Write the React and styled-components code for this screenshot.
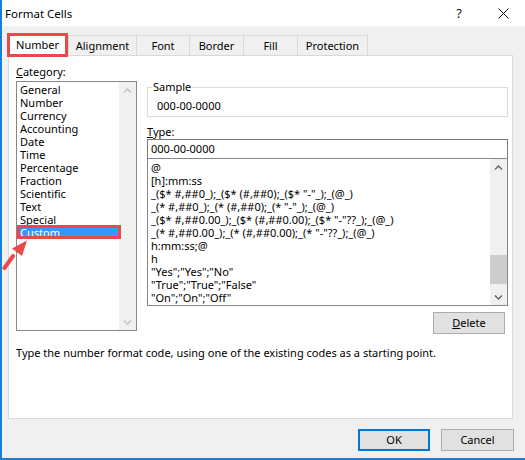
import React from "react";
import styled, { createGlobalStyle } from "styled-components";

const GlobalStyle = createGlobalStyle`
  html, body {
    margin: 0;
    padding: 0;
    background: #ffffff;
  }
  body {
    font-family: "Noto Sans", "Open Sans", sans-serif;
    font-size: 11px;
    color: #000000;
  }
  * {
    box-sizing: border-box;
  }
`;

const Window = styled.div`
  position: relative;
  width: 525px;
  height: 460px;
  background: #f0f0f0;
  border-left: 2px solid #1a7fd4;
  border-bottom: 2px solid #1a7fd4;
  display: flex;
  flex-direction: column;
  overflow: hidden;
`;

const TitleBar = styled.div`
  height: 26px;
  flex-shrink: 0;
  background: #ffffff;
  display: flex;
  align-items: center;
  padding-left: 3px;
`;

const Title = styled.span`
  flex: 1;
  font-size: 11.5px;
  line-height: 16px;
  padding-top: 1px;
`;

const TitleButton = styled.div`
  width: 44px;
  height: 26px;
  display: flex;
  align-items: center;
  justify-content: center;
  font-size: 13px;
  color: #111;
`;

const TabRow = styled.div`
  display: flex;
  align-items: flex-end;
  height: 22px;
  margin-top: 7px;
  padding-left: 5px;
`;

const Tab = styled.div`
  position: relative;
  width: ${(p) => p.w}px;
  height: ${(p) => (p.active ? 24 : 20)}px;
  margin-left: ${(p) => (p.first || p.afterActive ? 0 : -1)}px;
  margin-bottom: ${(p) => (p.active ? -2 : 0)}px;
  z-index: ${(p) => (p.active ? 1 : 0)};
  display: flex;
  align-items: center;
  justify-content: center;
  background: ${(p) => (p.active ? "#ffffff" : "#f0f0f0")};
  border: ${(p) => (p.active ? "3px solid #e84a4a" : "1px solid #d9d9d9")};
  border-bottom: ${(p) => (p.active ? "3px solid #e84a4a" : "none")};
  line-height: 16px;
`;

const Panel = styled.div`
  margin-left: 6px;
  width: 505px;
  height: 364px;
  flex-shrink: 0;
  background: #ffffff;
  border: 1px solid #d9d9d9;
  padding: 8px 4px 0 7px;
  display: flex;
  flex-direction: column;
`;

const ContentRow = styled.div`
  display: flex;
  gap: 10px;
`;

const LeftCol = styled.div`
  width: 121px;
  display: flex;
  flex-direction: column;
`;

const RightCol = styled.div`
  width: 361px;
  display: flex;
  flex-direction: column;
`;

const Label = styled.div`
  line-height: ${(p) => p.lh || 16}px;
  margin-top: ${(p) => p.mt || 0}px;
`;

const ListBox = styled.div`
  margin-top: 1px;
  height: 250px;
  border: 1px solid #828790;
  display: flex;
`;

const ListItems = styled.div`
  flex: 1;
  padding-top: 1px;
`;

const ListItem = styled.div`
  position: relative;
  height: 13px;
  line-height: 13px;
  padding-left: 3px;
  white-space: nowrap;
  background: ${(p) => (p.selected ? "#3399ff" : "transparent")};
  color: ${(p) => (p.selected ? "#ffffff" : "#000000")};

  ${(p) =>
    p.selected &&
    `
    &::after {
      content: "";
      position: absolute;
      top: -1px;
      left: 0;
      right: -2px;
      bottom: 0;
      border: 3px solid #e84a4a;
    }
  `}
`;

const ScrollBar = styled.div`
  width: 17px;
  background: #f0f0f0;
  display: flex;
  flex-direction: column;
`;

const ScrollArrow = styled.div`
  height: 17px;
  display: flex;
  align-items: center;
  justify-content: center;
`;

const ScrollTrack = styled.div`
  flex: 1;
`;

const Thumb = styled.div`
  margin-top: ${(p) => p.top}px;
  height: ${(p) => p.size}px;
  background: #cdcdcd;
`;

const GroupBox = styled.fieldset`
  margin: 16px 0 0 0;
  padding: 0 0 2px 9px;
  border: 1px solid #dcdcdc;
  min-width: 0;
`;

const Legend = styled.legend`
  margin-left: -5px;
  padding: 0 1px;
  line-height: 14px;
`;

const SampleValue = styled.div`
  padding-top: 4px;
  line-height: 16px;
`;

const TextInput = styled.div`
  height: 20px;
  border: 1px solid #7a7a7a;
  padding: 0 3px;
  line-height: 18px;
`;

const CodeList = styled.div`
  margin-top: -1px;
  height: 148px;
  border: 1px solid #828790;
  display: flex;
`;

const CodeLines = styled.div`
  flex: 1;
  padding: 2px 0 0 3px;
  line-height: 13px;
  white-space: pre;
  overflow: hidden;
`;

const Button = styled.div`
  width: ${(p) => p.w}px;
  height: 22px;
  display: flex;
  align-items: center;
  justify-content: center;
  background: #e1e1e1;
  border: ${(p) => (p.primary ? "2px solid #0078d7" : "1px solid #adadad")};
  line-height: 16px;
`;

const DeleteRow = styled.div`
  display: flex;
  justify-content: flex-end;
  margin: 6px 3px 0 0;
`;

const Description = styled.div`
  margin-top: 11px;
  line-height: 16px;
`;

const Footer = styled.div`
  display: flex;
  justify-content: flex-end;
  gap: 11px;
  padding: 10px 11px 0 0;
`;

const Arrow = styled.svg`
  position: absolute;
  left: -2px;
  top: 236px;
`;

const Chevron = ({ down, color }) => (
  <svg width="9" height="6" viewBox="0 0 9 6">
    <path
      d={down ? "M1 1.5 L4.5 5 L8 1.5" : "M1 4.5 L4.5 1 L8 4.5"}
      fill="none"
      stroke={color}
      strokeWidth="1.4"
    />
  </svg>
);

const tabs = [
  { name: "Number", w: 61 },
  { name: "Alignment", w: 69 },
  { name: "Font", w: 54 },
  { name: "Border", w: 55 },
  { name: "Fill", w: 55 },
  { name: "Protection", w: 71 },
];

const categories = [
  "General",
  "Number",
  "Currency",
  "Accounting",
  "Date",
  "Time",
  "Percentage",
  "Fraction",
  "Scientific",
  "Text",
  "Special",
  "Custom",
];

const codes = [
  "@",
  "[h]:mm:ss",
  '_($* #,##0_);_($* (#,##0);_($* "-"_);_(@_)',
  '_(* #,##0_);_(* (#,##0);_(* "-"_);_(@_)',
  '_($* #,##0.00_);_($* (#,##0.00);_($* "-"??_);_(@_)',
  '_(* #,##0.00_);_(* (#,##0.00);_(* "-"??_);_(@_)',
  "h:mm:ss;@",
  "h",
  '"Yes";"Yes";"No"',
  '"True";"True";"False"',
  '"On";"On";"Off"',
];

export default function App() {
  return (
    <>
      <GlobalStyle />
      <Window>
        <TitleBar>
          <Title>Format Cells</Title>
          <TitleButton>?</TitleButton>
          <TitleButton>
            <svg width="11" height="11" viewBox="0 0 11 11">
              <path d="M0.5 0.5 L10.5 10.5 M10.5 0.5 L0.5 10.5" stroke="#111" strokeWidth="1" />
            </svg>
          </TitleButton>
        </TitleBar>

        <TabRow>
          {tabs.map((t, i) => (
            <Tab
              key={t.name}
              w={t.w}
              active={i === 0}
              first={i === 0}
              afterActive={i === 1}
            >
              {t.name}
            </Tab>
          ))}
        </TabRow>

        <Panel>
          <ContentRow>
            <LeftCol>
              <Label>
                <u>C</u>ategory:
              </Label>
              <ListBox>
                <ListItems>
                  {categories.map((c) => (
                    <ListItem key={c} selected={c === "Custom"}>
                      {c}
                    </ListItem>
                  ))}
                </ListItems>
                <ScrollBar>
                  <ScrollArrow>
                    <Chevron color="#c0c0c0" />
                  </ScrollArrow>
                  <ScrollTrack />
                  <ScrollArrow>
                    <Chevron down color="#c0c0c0" />
                  </ScrollArrow>
                </ScrollBar>
              </ListBox>
            </LeftCol>

            <RightCol>
              <GroupBox>
                <Legend>Sample</Legend>
                <SampleValue>000-00-0000</SampleValue>
              </GroupBox>
              <Label lh={15} mt={7}>
                <u>T</u>ype:
              </Label>
              <TextInput>000-00-0000</TextInput>
              <CodeList>
                <CodeLines>{codes.join("\n")}</CodeLines>
                <ScrollBar>
                  <ScrollArrow>
                    <Chevron color="#606060" />
                  </ScrollArrow>
                  <ScrollTrack>
                    <Thumb top={79} size={29} />
                  </ScrollTrack>
                  <ScrollArrow>
                    <Chevron down color="#606060" />
                  </ScrollArrow>
                </ScrollBar>
              </CodeList>
              <DeleteRow>
                <Button w={72}>
                  <span>
                    <u>D</u>elete
                  </span>
                </Button>
              </DeleteRow>
            </RightCol>
          </ContentRow>
          <Description>
            Type the number format code, using one of the existing codes as a
            starting point.
          </Description>
        </Panel>

        <Footer>
          <Button w={72} primary>
            OK
          </Button>
          <Button w={73}>Cancel</Button>
        </Footer>

        <Arrow width="32" height="36" viewBox="0 0 32 36">
          <line x1="4.5" y1="32" x2="13" y2="20" stroke="#e84a4a" strokeWidth="4" strokeLinecap="round" />
          <polygon points="27,4.5 12,12.5 22,20" fill="#e84a4a" />
        </Arrow>
      </Window>
    </>
  );
}
